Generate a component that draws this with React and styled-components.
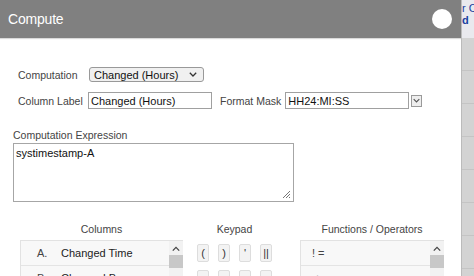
import React from "react";
import styled, { createGlobalStyle } from "styled-components";

const Global = createGlobalStyle`
  html, body {
    margin: 0;
    padding: 0;
    background: #fff;
    font-family: Arial, "Liberation Sans", sans-serif;
    overflow: hidden;
  }
`;

const Page = styled.div`
  width: 474px;
  height: 276px;
  display: flex;
  overflow: hidden;
`;

const Dialog = styled.div`
  width: 461px;
  height: 276px;
  display: flex;
  flex-direction: column;
  background: #fff;
  flex-shrink: 0;
  overflow: hidden;
`;

const Header = styled.div`
  height: 38px;
  flex-shrink: 0;
  background: #808080;
  display: flex;
  align-items: center;
  justify-content: space-between;
  padding: 0 9px 0 8px;
  box-shadow: 0 1px 1px rgba(0, 0, 0, 0.15);
`;

const Title = styled.div`
  color: #fff;
  font-size: 14px;
  letter-spacing: -0.2px;
`;

const Close = styled.div`
  width: 20px;
  height: 20px;
  border-radius: 50%;
  background: #fff;
`;

const Body = styled.div`
  display: flex;
  flex-direction: column;
  flex-shrink: 0;
  padding: 29px 0 0 0;
`;

const Row = styled.div`
  display: flex;
  align-items: center;
  padding-left: ${(p) => p.$indent || 18}px;
  margin-bottom: ${(p) => p.$gap || 0}px;
`;

const Label = styled.span`
  font-size: 10.5px;
  color: #444;
  width: ${(p) => (p.$w ? p.$w + "px" : "auto")};
  margin-right: ${(p) => p.$mr || 0}px;
  margin-left: ${(p) => p.$ml || 0}px;
`;

const Select = styled.div`
  width: 115px;
  height: 15px;
  border: 1px solid #999;
  border-radius: 3px;
  background: #f0f0f0;
  display: flex;
  align-items: center;
  justify-content: space-between;
  padding: 0 6px 0 4px;
  box-sizing: border-box;
  font-size: 11px;
  color: #111;
`;

const Input = styled.div`
  width: ${(p) => p.$w}px;
  height: 17px;
  border: 1px solid #a0a0a0;
  box-sizing: border-box;
  font-size: 11px;
  color: #111;
  display: flex;
  align-items: center;
  padding-left: 2px;
  background: #fff;
`;

const DropBtn = styled.div`
  width: 11px;
  height: 12px;
  margin-left: 2px;
  border: 1px solid #9a9a9a;
  background: #eee;
  box-sizing: border-box;
  display: flex;
  align-items: center;
  justify-content: center;
`;

const ExprLabel = styled.div`
  font-size: 10.5px;
  color: #444;
  padding-left: 13px;
  margin-top: 20px;
`;

const TextArea = styled.div`
  margin: 2px 0 0 13px;
  width: 281px;
  height: 59px;
  border: 1px solid #a6a6a6;
  box-sizing: border-box;
  font-size: 11px;
  color: #111;
  padding: 3px 2px;
  position: relative;
`;

const Grip = styled.svg`
  position: absolute;
  right: 2px;
  bottom: 2px;
`;

const Panels = styled.div`
  display: flex;
  margin-top: 21px;
  padding-left: 20px;
`;

const Panel = styled.div`
  display: flex;
  flex-direction: column;
  align-items: center;
  width: ${(p) => p.$w}px;
  margin-right: ${(p) => p.$mr || 0}px;
`;

const PanelTitle = styled.div`
  font-size: 10.5px;
  color: #444;
  height: 17px;
`;

const ListBox = styled.div`
  width: 100%;
  height: 45px;
  border: 1px solid #e2e2e2;
  border-right: none;
  box-sizing: border-box;
  display: flex;
  background: #f7f7f7;
`;

const ListItems = styled.div`
  flex: 1;
  display: flex;
  flex-direction: column;
`;

const ListRow = styled.div`
  height: 24px;
  flex-shrink: 0;
  border-bottom: 1px solid #e4e4e4;
  display: flex;
  align-items: center;
  font-size: 11px;
  color: #222;
  background: #f8f8f8;
`;

const Key = styled.span`
  width: ${(p) => p.$w}px;
  padding-left: ${(p) => p.$pl}px;
  box-sizing: border-box;
  color: #444;
`;

const Scroll = styled.div`
  width: 14px;
  display: flex;
  flex-direction: column;
  align-items: center;
  background: #f2f2f2;
`;

const Thumb = styled.div`
  width: 14px;
  height: 13px;
  background: #c8c8c8;
  margin-top: 3px;
`;

const Keypad = styled.div`
  display: grid;
  grid-template-columns: repeat(4, 12px);
  column-gap: 9px;
  row-gap: 8px;
  margin-top: 4px;
`;

const KeyBtn = styled.div`
  height: 18px;
  border: 1px solid #ddd;
  border-radius: 2px;
  background: #f3f3f3;
  box-sizing: border-box;
  font-size: 11px;
  color: #333;
  display: flex;
  align-items: center;
  justify-content: center;
`;

const Backdrop = styled.div`
  flex: 1;
  display: flex;
  flex-direction: column;
  background: #d3d3d3;
  border-left: 1px solid #bbb;
  overflow: hidden;
`;

const BackTop = styled.div`
  height: 36px;
  flex-shrink: 0;
  background: #e9e9ee;
  font-size: 11px;
  color: #1a3fa0;
  padding-top: 2px;
  line-height: 12px;
  white-space: nowrap;
`;

const Stripe = styled.div`
  height: 32px;
  flex-shrink: 0;
  border-bottom: 1px solid #c4c4c4;
`;

const Chevron = ({ size = 8 }) => (
  <svg width={size} height={size * 0.6} viewBox="0 0 10 6">
    <path d="M1 1l4 4 4-4" fill="none" stroke="#333" strokeWidth="1.6" />
  </svg>
);

const UpArrow = () => (
  <svg width="8" height="6" viewBox="0 0 10 6" style={{ marginTop: 5 }}>
    <path d="M1 5l4-4 4 4" fill="none" stroke="#444" strokeWidth="1.6" />
  </svg>
);

export default function App() {
  return (
    <Page>
      <Global />
      <Dialog>
        <Header>
          <Title>Compute</Title>
          <Close />
        </Header>
        <Body>
          <Row $gap={10}>
            <Label $w={71}>Computation</Label>
            <Select>
              <span>Changed (Hours)</span>
              <Chevron />
            </Select>
          </Row>
          <Row>
            <Label $w={70}>Column Label</Label>
            <Input $w={124}>Changed (Hours)</Input>
            <Label $ml={8} $mr={4}>
              Format Mask
            </Label>
            <Input $w={124}>HH24:MI:SS</Input>
            <DropBtn>
              <svg width="7" height="5" viewBox="0 0 10 6">
                <path d="M1 1l4 4 4-4" fill="none" stroke="#555" strokeWidth="1.6" />
              </svg>
            </DropBtn>
          </Row>
          <ExprLabel>Computation Expression</ExprLabel>
          <TextArea>
            systimestamp-A
            <Grip width="9" height="9" viewBox="0 0 9 9">
              <path d="M8 1L1 8M8 4L4 8M8 7L7 8" stroke="#777" strokeWidth="1" />
            </Grip>
          </TextArea>
          <Panels>
            <Panel $w={163} $mr={14}>
              <PanelTitle>Columns</PanelTitle>
              <ListBox>
                <ListItems>
                  <ListRow>
                    <Key $w={40} $pl={16}>A.</Key>
                    <span>Changed Time</span>
                  </ListRow>
                  <ListRow>
                    <Key $w={40} $pl={16}>B.</Key>
                    <span>Changed By</span>
                  </ListRow>
                </ListItems>
                <Scroll>
                  <UpArrow />
                  <Thumb />
                </Scroll>
              </ListBox>
            </Panel>
            <Panel $w={75} $mr={28}>
              <PanelTitle>Keypad</PanelTitle>
              <Keypad>
                <KeyBtn>(</KeyBtn>
                <KeyBtn>)</KeyBtn>
                <KeyBtn>'</KeyBtn>
                <KeyBtn>||</KeyBtn>
                <KeyBtn />
                <KeyBtn />
                <KeyBtn />
                <KeyBtn />
              </Keypad>
            </Panel>
            <Panel $w={144}>
              <PanelTitle>Functions / Operators</PanelTitle>
              <ListBox>
                <ListItems>
                  <ListRow>
                    <Key $w={40} $pl={11}>! =</Key>
                  </ListRow>
                  <ListRow>
                    <Key $w={40} $pl={11}>&lt;</Key>
                  </ListRow>
                </ListItems>
                <Scroll>
                  <UpArrow />
                  <Thumb />
                </Scroll>
              </ListBox>
            </Panel>
          </Panels>
        </Body>
      </Dialog>
      <Backdrop>
        <BackTop>
          r C
          <br />
          <b>d</b>
        </BackTop>
        <Stripe />
        <Stripe />
        <Stripe />
        <Stripe />
        <Stripe />
        <Stripe />
        <Stripe />
      </Backdrop>
    </Page>
  );
}
